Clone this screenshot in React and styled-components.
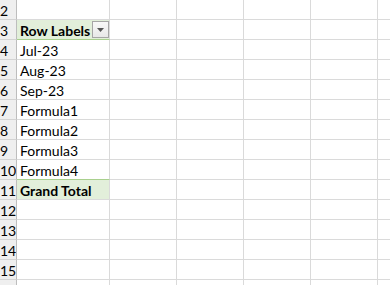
import React from "react";
import styled, { createGlobalStyle } from "styled-components";

const GlobalStyle = createGlobalStyle`
  html, body {
    margin: 0;
    padding: 0;
    background: #ffffff;
    overflow: hidden;
  }
`;

const Sheet = styled.div`
  width: 390px;
  height: 285px;
  overflow: hidden;
  font-family: Lato, "Liberation Sans", sans-serif;
  font-size: 14px;
  color: #000;
`;

const Row = styled.div`
  display: flex;
  height: 20px;
`;

const RowHead = styled.div`
  flex: none;
  width: 16px;
  height: 19px;
  background: #efefef;
  border-right: 1px solid #bdbdbd;
  border-bottom: 1px solid #d4d4d4;
  line-height: 21px;
  font-size: 14px;
  padding-left: 1px;
  box-sizing: content-box;
  margin-left: -1px;
  white-space: nowrap;
  overflow: hidden;
`;

const Cell = styled.div`
  position: relative;
  flex: none;
  width: ${(p) => p.$w}px;
  height: 19px;
  border-right: 1px solid #dadada;
  border-bottom: 1px solid ${(p) => (p.$greenBottom ? "#a9d08e" : "#dadada")};
  border-top: ${(p) => (p.$greenTop ? "1px solid #a9d08e" : "none")};
  margin-top: ${(p) => (p.$greenTop ? "-1px" : "0")};
  background: ${(p) => (p.$fill ? "#e2efda" : "transparent")};
  font-weight: ${(p) => (p.$bold ? 700 : 400)};
  line-height: 21px;
  padding-left: 3px;
  box-sizing: content-box;
  white-space: nowrap;
`;

const FilterButton = styled.div`
  position: absolute;
  right: 0px;
  top: 1px;
  width: 15px;
  height: 15px;
  border: 1px solid #a6a6a6;
  background: linear-gradient(#f8f8f8, #e8e8e8);
  display: flex;
  align-items: center;
  justify-content: center;
`;

const cols = [89, 63, 63, 63, 63, 63];

const data = [
  { n: 2 },
  { n: 3, label: "Row Labels", head: true },
  { n: 4, label: "Jul-23" },
  { n: 5, label: "Aug-23" },
  { n: 6, label: "Sep-23" },
  { n: 7, label: "Formula1" },
  { n: 8, label: "Formula2" },
  { n: 9, label: "Formula3" },
  { n: 10, label: "Formula4" },
  { n: 11, label: "Grand Total", total: true },
  { n: 12 },
  { n: 13 },
  { n: 14 },
  { n: 15 },
  { n: 16, hidden: true },
];

export default function App() {
  return (
    <>
      <GlobalStyle />
      <Sheet>
        {data.map((r) => (
          <Row key={r.n}>
            <RowHead>{r.hidden ? "" : r.n}</RowHead>
            {cols.map((w, i) =>
              i === 0 ? (
                <Cell
                  key={i}
                  $w={w}
                  $fill={r.head || r.total}
                  $bold={r.head || r.total}
                  $greenBottom={r.head}
                  $greenTop={r.total}
                >
                  {r.label}
                  {r.head && (
                    <FilterButton>
                      <svg width="7" height="4" viewBox="0 0 7 4">
                        <polygon points="0,0 7,0 3.5,4" fill="#555" />
                      </svg>
                    </FilterButton>
                  )}
                </Cell>
              ) : (
                <Cell key={i} $w={w} />
              )
            )}
          </Row>
        ))}
      </Sheet>
    </>
  );
}
